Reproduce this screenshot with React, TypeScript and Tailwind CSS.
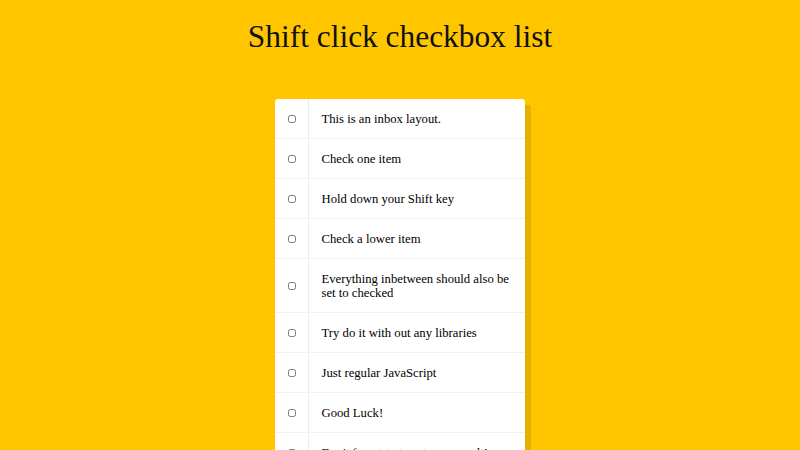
import React, { useRef, useState } from 'react';

const items = [
    'This is an inbox layout.',
    'Check one item',
    'Hold down your Shift key',
    'Check a lower item',
    'Everything inbetween should also be set to checked',
    'Try do it with out any libraries',
    'Just regular JavaScript',
    'Good Luck!',
    "Don't forget to tweet your result!",
];

const App: React.FC = () => {
    const [checked, setChecked] = useState<boolean[]>(items.map(() => false));
    const lastChecked = useRef<number | null>(null);

    const handleClick = (index: number, e: React.MouseEvent<HTMLInputElement>) => {
        const isChecked = e.currentTarget.checked;
        setChecked(prev => {
            const next = [...prev];
            next[index] = isChecked;
            // shift + click fills everything between the last box and this one
            if (e.shiftKey && isChecked && lastChecked.current !== null) {
                const start = Math.min(lastChecked.current, index);
                const end = Math.max(lastChecked.current, index);
                for (let i = start; i <= end; i++) next[i] = true;
            }
            return next;
        });
        lastChecked.current = index;
    };

    return (
        <div className="min-h-screen bg-[#ffc600] font-['Liberation_Serif',serif] text-black overflow-hidden">
            <h1 className="pt-[19px] text-center text-[31.4px] leading-[36px] text-[#111]">Shift click checkbox list</h1>

            <div className="mx-auto mt-[44px] w-[250px] rounded-[3px] bg-white shadow-[6px_6px_0_rgba(0,0,0,0.1)]">
                {items.map((item, i) => (
                    <div
                        key={item}
                        className="flex items-center border-b border-[#f1f1f1] last:border-b-0"
                    >
                        <input
                            type="checkbox"
                            checked={checked[i]}
                            onChange={() => {}}
                            onClick={(e) => handleClick(i, e)}
                            className="m-[12.5px] h-[8px] w-[8px] shrink-0"
                        />
                        <p
                            className={`flex-1 border-l border-[#e6eefc] p-[12.5px] text-[12.7px] leading-[14px] transition-colors ${
                                checked[i] ? 'bg-[#f9f9f9] line-through' : ''
                            }`}
                        >
                            {item}
                        </p>
                    </div>
                ))}
            </div>
        </div>
    );
};

export default App;
